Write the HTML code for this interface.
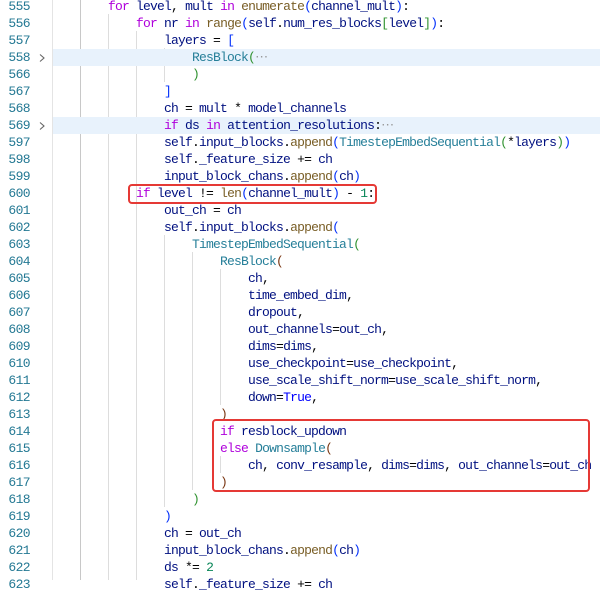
<!DOCTYPE html>
<html><head><meta charset="utf-8"><style>
body{margin:0;width:600px;height:580px;overflow:hidden;background:#fff;position:relative;font-family:"Liberation Mono",monospace;font-size:13px;letter-spacing:-0.8px}
.r{position:absolute;left:0;width:600px;height:17px;line-height:17px;white-space:pre}
.n{position:absolute;left:0;width:30px;text-align:right;color:#237893;letter-spacing:-0.6px}
.c{position:absolute;left:52px;color:#001080}
.hl{background:#e8f2fc}
.k{color:#AF00DB}.t{color:#267F99}.f{color:#795E26}.m{color:#098658}.o{color:#000}.b{color:#0000FF}
.p1{color:#0431FA}.p2{color:#319331}.p3{color:#7B3814}.g{color:#999}
.chev{position:absolute;left:38px;top:4px}
.v{position:absolute;width:1px;background:#ddd}
.box{position:absolute;border:2px solid #e53935;border-radius:4px;box-sizing:border-box}
</style></head><body>
<div class="v" style="left:52px;top:0;height:580px;background:#e4e4e4"></div>
<div class="v" style="left:80px;top:0;height:580px;background:#c8c8c8"></div>
<div class="v" style="left:108px;top:14px;height:566px"></div>
<div class="v" style="left:136px;top:31px;height:549px"></div>
<div class="v" style="left:164px;top:48px;height:34px"></div>
<div class="v" style="left:164px;top:235px;height:272px"></div>
<div class="v" style="left:192px;top:252px;height:238px"></div>
<div class="v" style="left:220px;top:269px;height:136px"></div>
<div class="v" style="left:220px;top:456px;height:17px"></div>

<div class="r" style="top:-2px"><span class="n">555</span><span class="c">        <span class="k">for</span> level<span class="o">,</span> mult <span class="k">in</span> <span class="f">enumerate</span><span class="p1">(</span>channel_mult<span class="p1">)</span><span class="o">:</span></span></div>
<div class="r" style="top:15px"><span class="n">556</span><span class="c">            <span class="k">for</span> nr <span class="k">in</span> <span class="f">range</span><span class="p1">(</span>self<span class="o">.</span>num_res_blocks<span class="p2">[</span>level<span class="p2">]</span><span class="p1">)</span><span class="o">:</span></span></div>
<div class="r" style="top:32px"><span class="n">557</span><span class="c">                layers <span class="o">=</span> <span class="p1">[</span></span></div>
<div class="r hl" style="top:49px;left:53px;width:547px"></div>
<div class="r" style="top:49px"><span class="n">558</span><svg class="chev" width="8" height="10" viewBox="0 0 8 10"><path d="M2 1.5L6 5L2 8.5" fill="none" stroke="#666" stroke-width="1.1"/></svg><span class="c">                    <span class="t">ResBlock</span><span class="p2">(</span><span class="g">⋯</span></span></div>
<div class="r" style="top:66px"><span class="n">566</span><span class="c">                    <span class="p2">)</span></span></div>
<div class="r" style="top:83px"><span class="n">567</span><span class="c">                <span class="p1">]</span></span></div>
<div class="r" style="top:100px"><span class="n">568</span><span class="c">                ch <span class="o">=</span> mult <span class="o">*</span> model_channels</span></div>
<div class="r hl" style="top:117px;left:53px;width:547px"></div>
<div class="r" style="top:117px"><span class="n">569</span><svg class="chev" width="8" height="10" viewBox="0 0 8 10"><path d="M2 1.5L6 5L2 8.5" fill="none" stroke="#666" stroke-width="1.1"/></svg><span class="c">                <span class="k">if</span> ds <span class="k">in</span> attention_resolutions<span class="o">:</span><span class="g">⋯</span></span></div>
<div class="r" style="top:134px"><span class="n">597</span><span class="c">                self<span class="o">.</span>input_blocks<span class="o">.</span><span class="f">append</span><span class="p1">(</span><span class="t">TimestepEmbedSequential</span><span class="p2">(</span><span class="o">*</span>layers<span class="p2">)</span><span class="p1">)</span></span></div>
<div class="r" style="top:151px"><span class="n">598</span><span class="c">                self<span class="o">.</span>_feature_size <span class="o">+=</span> ch</span></div>
<div class="r" style="top:168px"><span class="n">599</span><span class="c">                input_block_chans<span class="o">.</span><span class="f">append</span><span class="p1">(</span>ch<span class="p1">)</span></span></div>
<div class="r" style="top:185px"><span class="n">600</span><span class="c">            <span class="k">if</span> level <span class="o">!=</span> <span class="f">len</span><span class="p1">(</span>channel_mult<span class="p1">)</span> <span class="o">-</span> <span class="m">1</span><span class="o">:</span></span></div>
<div class="r" style="top:202px"><span class="n">601</span><span class="c">                out_ch <span class="o">=</span> ch</span></div>
<div class="r" style="top:219px"><span class="n">602</span><span class="c">                self<span class="o">.</span>input_blocks<span class="o">.</span><span class="f">append</span><span class="p1">(</span></span></div>
<div class="r" style="top:236px"><span class="n">603</span><span class="c">                    <span class="t">TimestepEmbedSequential</span><span class="p2">(</span></span></div>
<div class="r" style="top:253px"><span class="n">604</span><span class="c">                        <span class="t">ResBlock</span><span class="p3">(</span></span></div>
<div class="r" style="top:270px"><span class="n">605</span><span class="c">                            ch<span class="o">,</span></span></div>
<div class="r" style="top:287px"><span class="n">606</span><span class="c">                            time_embed_dim<span class="o">,</span></span></div>
<div class="r" style="top:304px"><span class="n">607</span><span class="c">                            dropout<span class="o">,</span></span></div>
<div class="r" style="top:321px"><span class="n">608</span><span class="c">                            out_channels<span class="o">=</span>out_ch<span class="o">,</span></span></div>
<div class="r" style="top:338px"><span class="n">609</span><span class="c">                            dims<span class="o">=</span>dims<span class="o">,</span></span></div>
<div class="r" style="top:355px"><span class="n">610</span><span class="c">                            use_checkpoint<span class="o">=</span>use_checkpoint<span class="o">,</span></span></div>
<div class="r" style="top:372px"><span class="n">611</span><span class="c">                            use_scale_shift_norm<span class="o">=</span>use_scale_shift_norm<span class="o">,</span></span></div>
<div class="r" style="top:389px"><span class="n">612</span><span class="c">                            down<span class="o">=</span><span class="b">True</span><span class="o">,</span></span></div>
<div class="r" style="top:406px"><span class="n">613</span><span class="c">                        <span class="p3">)</span></span></div>
<div class="r" style="top:423px"><span class="n">614</span><span class="c">                        <span class="k">if</span> resblock_updown</span></div>
<div class="r" style="top:440px"><span class="n">615</span><span class="c">                        <span class="k">else</span> <span class="t">Downsample</span><span class="p3">(</span></span></div>
<div class="r" style="top:457px"><span class="n">616</span><span class="c">                            ch<span class="o">,</span> conv_resample<span class="o">,</span> dims<span class="o">=</span>dims<span class="o">,</span> out_channels<span class="o">=</span>out_ch</span></div>
<div class="r" style="top:474px"><span class="n">617</span><span class="c">                        <span class="p3">)</span></span></div>
<div class="r" style="top:491px"><span class="n">618</span><span class="c">                    <span class="p2">)</span></span></div>
<div class="r" style="top:508px"><span class="n">619</span><span class="c">                <span class="p1">)</span></span></div>
<div class="r" style="top:525px"><span class="n">620</span><span class="c">                ch <span class="o">=</span> out_ch</span></div>
<div class="r" style="top:542px"><span class="n">621</span><span class="c">                input_block_chans<span class="o">.</span><span class="f">append</span><span class="p1">(</span>ch<span class="p1">)</span></span></div>
<div class="r" style="top:559px"><span class="n">622</span><span class="c">                ds <span class="o">*=</span> <span class="m">2</span></span></div>
<div class="r" style="top:576px"><span class="n">623</span><span class="c">                self<span class="o">.</span>_feature_size <span class="o">+=</span> ch</span></div>

<div class="box" style="left:128px;top:184px;width:249px;height:20px"></div>
<div class="box" style="left:212px;top:419px;width:378px;height:73px"></div>
</body></html>
